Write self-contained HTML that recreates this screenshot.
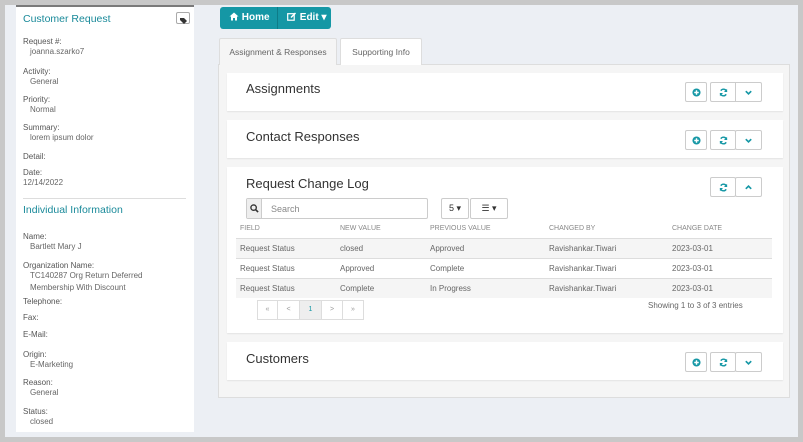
<!DOCTYPE html>
<html><head><style>
*{box-sizing:border-box;margin:0;padding:0}
body{width:803px;height:442px;background:#c8c8c8;font-family:"Liberation Sans",sans-serif;position:relative;overflow:hidden}
.inner{position:absolute;left:5px;top:5px;width:793px;height:432px;background:#eceff4}
.left{position:absolute;left:16px;top:5px;width:178px;height:427px;background:#fff;border-top:2px solid #7a7a7a}
.abs{position:absolute}
.h{color:#1a8a9a;font-size:10.5px}
.lbl{position:absolute;left:7px;font-size:8px;color:#555}
.val{position:absolute;left:14px;font-size:8px;color:#666;line-height:12px}
.tag{position:absolute;left:160px;top:5px;width:14px;height:12px;border:1px solid #aaa;border-radius:2px}
.btn{position:absolute;top:7px;height:22px;background:#1597a5;color:#fff;font-size:10px;font-weight:bold;line-height:22px;padding-left:9px}
.panel{position:absolute;left:218px;top:64px;width:572px;height:334px;background:#f5f5f5;border:1px solid #ddd}
.card{position:absolute;left:227px;width:556px;background:#fff;box-shadow:0 1px 1px #e4e4e4}
.ct{position:absolute;left:19px;font-size:13px;color:#333}
.ib{position:absolute;height:20px;border:1px solid #ccc;border-radius:2px;background:#fff;display:flex;align-items:center;justify-content:center}
.tab{position:absolute;top:38px;height:27px;font-size:8.5px;color:#666;line-height:26px;text-align:center;border:1px solid #ddd;border-bottom:none;border-radius:2px 2px 0 0}
table{position:absolute;left:9px;top:52px;width:536px;border-collapse:collapse;font-size:8px;color:#666}
td{height:20px;padding-left:4px;border-top:1px solid #ddd}
tr.hd td{border-top:none;font-size:7px;color:#888;height:19px}
tr.g td{background:#f5f5f5}
</style></head><body>
<svg width="0" height="0" style="position:absolute">
<defs>
<symbol id="plus" viewBox="0 0 10 10"><circle cx="5" cy="5" r="4.5" fill="#1597a5"/><path d="M5 2.5v5M2.5 5h5" stroke="#fff" stroke-width="1.6"/></symbol>
<symbol id="ref" viewBox="0 0 10 10"><path d="M8.5 4A3.6 3.6 0 0 0 2 3M1.5 6A3.6 3.6 0 0 0 8 7" fill="none" stroke="#1597a5" stroke-width="1.6"/><path d="M9 1v3.5H5.5zM1 9V5.5h3.5z" fill="#1597a5"/></symbol>
<symbol id="dn" viewBox="0 0 10 10"><path d="M2 3.5l3 3 3-3" fill="none" stroke="#1597a5" stroke-width="1.8"/></symbol>
<symbol id="up" viewBox="0 0 10 10"><path d="M2 6.5l3-3 3 3" fill="none" stroke="#1597a5" stroke-width="1.8"/></symbol>
</defs></svg>
<div class="inner"></div>
<div class="left">
<div class="abs h" style="left:7px;top:6px">Customer Request</div>
<div class="tag"><svg width="12" height="10" viewBox="0 0 12 10"><path d="M3 2h4l3 3-3 3-4-4z" fill="#333"/></svg></div>
<div class="lbl" style="top:30px">Request #:</div><div class="val" style="top:39px">joanna.szarko7</div>
<div class="lbl" style="top:60px">Activity:</div><div class="val" style="top:69px">General</div>
<div class="lbl" style="top:88px">Priority:</div><div class="val" style="top:97px">Normal</div>
<div class="lbl" style="top:116px">Summary:</div><div class="val" style="top:125px">lorem ipsum dolor</div>
<div class="lbl" style="top:145px">Detail:</div>
<div class="lbl" style="top:161px">Date:</div><div class="val" style="left:7px;top:170px">12/14/2022</div>
<div class="abs" style="left:7px;top:191px;width:163px;border-top:1px solid #ddd"></div>
<div class="abs h" style="left:7px;top:197px">Individual Information</div>
<div class="lbl" style="top:225px">Name:</div><div class="val" style="top:234px">Bartlett Mary J</div>
<div class="lbl" style="top:254px">Organization Name:</div><div class="val" style="top:263px">TC140287 Org Return Deferred<br>Membership With Discount</div>
<div class="lbl" style="top:290px">Telephone:</div>
<div class="lbl" style="top:306px">Fax:</div>
<div class="lbl" style="top:323px">E-Mail:</div>
<div class="lbl" style="top:343px">Origin:</div><div class="val" style="top:352px">E-Marketing</div>
<div class="lbl" style="top:371px">Reason:</div><div class="val" style="top:380px">General</div>
<div class="lbl" style="top:400px">Status:</div><div class="val" style="top:409px">closed</div>
</div>
<div class="btn" style="left:220px;width:57px;border-radius:3px 0 0 3px"><svg width="10" height="9" viewBox="0 0 10 9" style="vertical-align:-1px"><path d="M5 0.5L0.5 4.5H2V8.5H4V6H6V8.5H8V4.5H9.5z" fill="#fff"/></svg> Home</div>
<div class="btn" style="left:277px;width:54px;border-left:1px solid #0e7c88;border-radius:0 3px 3px 0"><svg width="10" height="9" viewBox="0 0 10 9" style="vertical-align:-1px"><rect x="0.7" y="1.7" width="6.5" height="6.5" fill="none" stroke="#fff" stroke-width="1.2"/><path d="M4 5.5L8.5 1" stroke="#fff" stroke-width="1.5"/></svg> Edit ▾</div>
<div class="panel"></div>
<div class="tab" style="left:219px;width:118px;background:#f5f5f5">Assignment &amp; Responses</div>
<div class="tab" style="left:340px;width:82px;background:#fff">Supporting Info</div>
<div class="card" style="top:73px;height:38px"><div class="ct" style="top:8px">Assignments</div>
<div class="ib" style="left:458px;top:9px;width:22px"><svg width="9" height="9"><use href="#plus"/></svg></div><div class="ib" style="left:483px;top:9px;width:26px;border-radius:2px 0 0 2px"><svg width="9" height="9"><use href="#ref"/></svg></div><div class="ib" style="left:508px;top:9px;width:27px;border-radius:0 2px 2px 0"><svg width="9" height="9"><use href="#dn"/></svg></div></div>
<div class="card" style="top:120px;height:38px"><div class="ct" style="top:9px">Contact Responses</div>
<div class="ib" style="left:458px;top:10px;width:22px"><svg width="9" height="9"><use href="#plus"/></svg></div><div class="ib" style="left:483px;top:10px;width:26px"><svg width="9" height="9"><use href="#ref"/></svg></div><div class="ib" style="left:508px;top:10px;width:27px"><svg width="9" height="9"><use href="#dn"/></svg></div></div>
<div class="card" style="top:167px;height:166px"><div class="ct" style="top:9px">Request Change Log</div>
<div class="ib" style="left:483px;top:10px;width:26px"><svg width="9" height="9"><use href="#ref"/></svg></div><div class="ib" style="left:508px;top:10px;width:27px"><svg width="9" height="9"><use href="#up"/></svg></div>
<div class="abs" style="left:19px;top:31px;width:182px;height:21px;border:1px solid #ccc;border-radius:2px"><div class="abs" style="left:0;top:0;width:15px;height:19px;background:#eee;border-right:1px solid #ccc;display:flex;align-items:center;justify-content:center"><svg width="9" height="9" viewBox="0 0 10 10"><circle cx="4" cy="4" r="3" fill="none" stroke="#333" stroke-width="1.5"/><path d="M6 6l3 3" stroke="#333" stroke-width="1.8"/></svg></div><div class="abs" style="left:24px;top:5px;font-size:9px;color:#888">Search</div></div>
<div class="abs" style="left:214px;top:31px;width:28px;height:21px;border:1px solid #ccc;border-radius:2px;font-size:9px;text-align:center;line-height:19px;color:#333">5 ▾</div>
<div class="abs" style="left:243px;top:31px;width:38px;height:21px;border:1px solid #ccc;border-radius:2px;font-size:9px;text-align:center;line-height:19px;color:#333">☰ ▾</div>
<table>
<tr class="hd"><td style="width:100px">FIELD</td><td style="width:90px">NEW VALUE</td><td style="width:119px">PREVIOUS VALUE</td><td style="width:123px">CHANGED BY</td><td>CHANGE DATE</td></tr>
<tr class="g"><td>Request Status</td><td>closed</td><td>Approved</td><td>Ravishankar.Tiwari</td><td>2023-03-01</td></tr>
<tr><td>Request Status</td><td>Approved</td><td>Complete</td><td>Ravishankar.Tiwari</td><td>2023-03-01</td></tr>
<tr class="g"><td>Request Status</td><td>Complete</td><td>In Progress</td><td>Ravishankar.Tiwari</td><td>2023-03-01</td></tr>
</table>
<div class="abs" style="left:30px;top:133px;height:20px;display:flex;font-size:7px;color:#999">
<div style="width:21px;border:1px solid #ddd;text-align:center;line-height:18px">«</div><div style="width:22px;border:1px solid #ddd;border-left:none;text-align:center;line-height:18px">&lt;</div><div style="width:22px;border:1px solid #ddd;border-left:none;background:#eee;color:#1597a5;text-align:center;line-height:18px">1</div><div style="width:21px;border:1px solid #ddd;border-left:none;text-align:center;line-height:18px">&gt;</div><div style="width:21px;border:1px solid #ddd;border-left:none;text-align:center;line-height:18px">»</div></div>
<div class="abs" style="left:421px;top:134px;font-size:8px;color:#666">Showing 1 to 3 of 3 entries</div>
</div>
<div class="card" style="top:342px;height:38px"><div class="ct" style="top:9px">Customers</div>
<div class="ib" style="left:458px;top:10px;width:22px"><svg width="9" height="9"><use href="#plus"/></svg></div><div class="ib" style="left:483px;top:10px;width:26px"><svg width="9" height="9"><use href="#ref"/></svg></div><div class="ib" style="left:508px;top:10px;width:27px"><svg width="9" height="9"><use href="#dn"/></svg></div></div>
</body></html>
